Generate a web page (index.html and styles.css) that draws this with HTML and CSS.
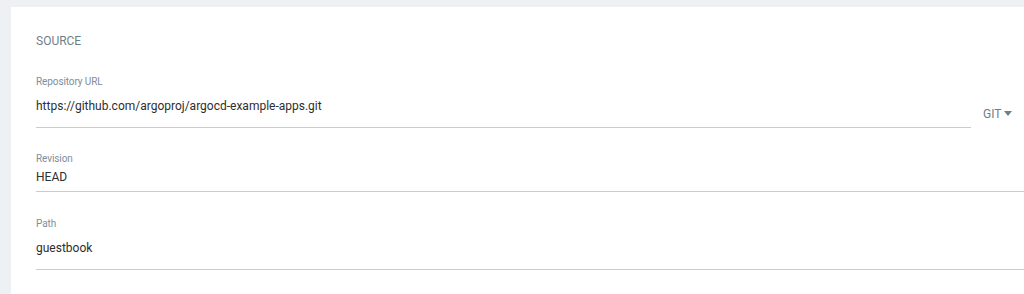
FILE: index.html
```html
<!DOCTYPE html>
<html lang="en">
<head>
<meta charset="utf-8">
<title>Source</title>
<link rel="stylesheet" href="styles.css">
</head>
<body>
<div class="page">
  <section class="card">
    <h3 class="section-title">SOURCE</h3>
    <div class="field field--repo">
      <div class="field__main">
        <label class="field__label">Repository URL</label>
        <div class="field__input field__input--loose">https://github.com/argoproj/argocd-example-apps.git</div>
      </div>
      <div class="field__type">
        <span class="type-select">GIT<svg class="caret" width="8" height="5" viewBox="0 0 8 5"><path d="M0 0h8L4 5z" fill="currentColor"/></svg></span>
      </div>
    </div>
    <div class="field field--revision">
      <div class="field__main">
        <label class="field__label">Revision</label>
        <div class="field__input field__input--tight">HEAD</div>
      </div>
    </div>
    <div class="field field--path">
      <div class="field__main">
        <label class="field__label">Path</label>
        <div class="field__input field__input--loose">guestbook</div>
      </div>
    </div>
  </section>
</div>
</body>
</html>
```

FILE: styles.css
```css
html, body {
  margin: 0;
  padding: 0;
  background: #eef1f4;
  overflow: hidden;
  font-family: Roboto, "Liberation Sans", Arial, sans-serif;
}

.page {
  padding: 7px 0 0 11px;
  width: 1100px;
}

.card {
  background: #ffffff;
  width: 1060px;
  min-height: 300px;
  box-sizing: border-box;
  padding: 26px 25px 20px 25px;
}

.section-title {
  margin: 0;
  font-size: 12px;
  line-height: 16px;
  font-weight: 400;
  color: #6d7f8b;
}

.field {
  display: flex;
  align-items: flex-start;
}

.field__main {
  flex: 1;
}

.field__label {
  display: block;
  font-size: 10px;
  line-height: 12px;
  color: #7d8e9a;
  letter-spacing: -0.1px;
}

.field__input {
  font-size: 12px;
  line-height: 16px;
  color: #2e2e2e;
  border-bottom: 1px solid #cccccc;
}

.field__input--loose {
  margin-top: 10px;
  padding-bottom: 13px;
}

.field__input--tight {
  margin-top: 4px;
  padding-bottom: 6px;
}

.field--repo {
  margin-top: 27px;
}

.field--revision {
  margin-top: 25px;
}

.field--path {
  margin-top: 26px;
}

.field__type {
  width: 63px;
  padding-left: 12px;
  padding-top: 27px;
}

.type-select {
  display: inline-flex;
  align-items: center;
  gap: 3px;
  font-size: 12px;
  line-height: 16px;
  color: #6d7f8b;
}

.caret {
  display: block;
  margin-top: -2px;
}
```
